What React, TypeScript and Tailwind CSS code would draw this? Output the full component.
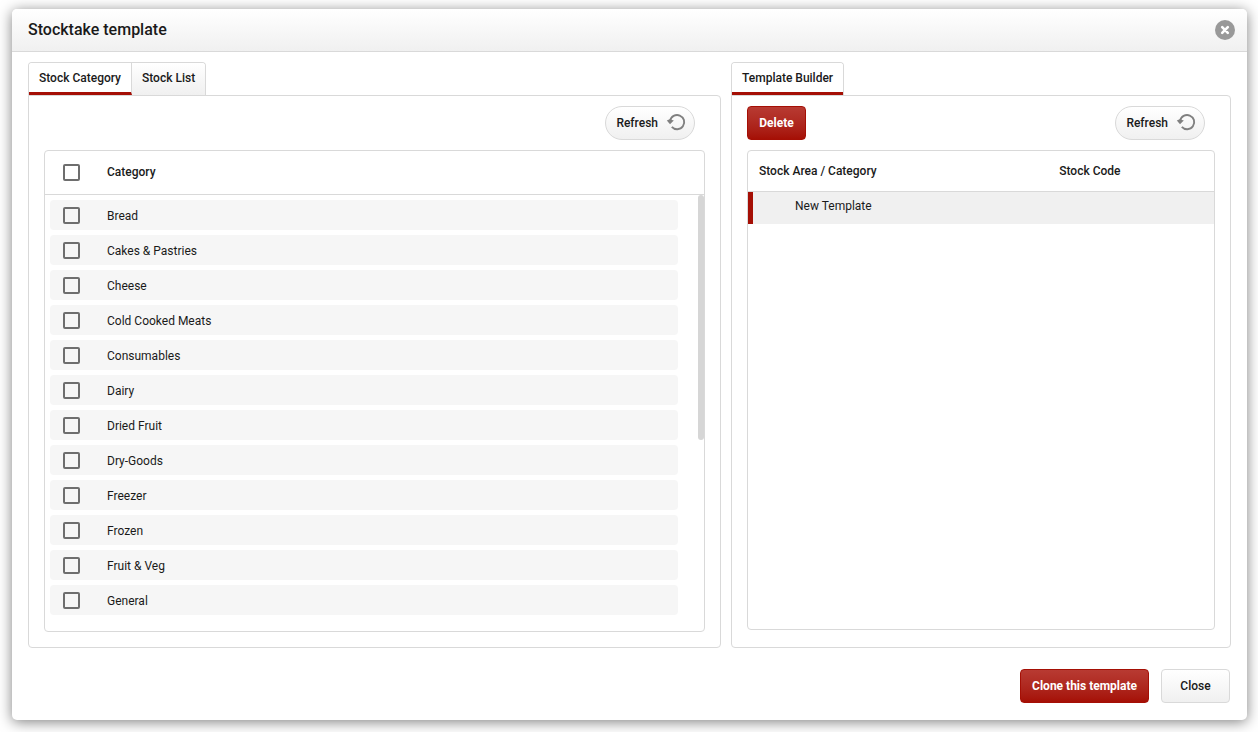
import { useState } from "react";

const categories = [
  "Bread",
  "Cakes & Pastries",
  "Cheese",
  "Cold Cooked Meats",
  "Consumables",
  "Dairy",
  "Dried Fruit",
  "Dry-Goods",
  "Freezer",
  "Frozen",
  "Fruit & Veg",
  "General",
];

const checkboxClass =
  "block size-[17px] shrink-0 cursor-pointer appearance-none rounded-[2px] border-2 border-[#6e6e6e] bg-transparent checked:bg-[#a50f05]";

function RefreshButton() {
  return (
    <button
      type="button"
      className="flex h-[34px] items-center gap-2 rounded-full border border-[#d9d9d9] bg-linear-to-b from-white to-[#f0f0f0] pr-2 pl-[10px] font-medium"
    >
      Refresh
      <svg viewBox="0 0 20 20" className="size-5" fill="none" aria-hidden="true">
        <path d="M4.1 8A7.1 7.1 0 1 1 5.8 13.8" stroke="#808080" strokeWidth="1.9" />
        <path d="M0.8 7.4L3.6 6.2L7.8 7.4L4 11.2Z" fill="#808080" />
      </svg>
    </button>
  );
}

function PrimaryButton({ children }: { children: string }) {
  return (
    <button
      type="button"
      className="h-[34px] min-w-[59px] rounded border border-[#a50f05] bg-linear-to-b from-[#b83a32] to-[#a50f05] px-[11px] font-bold text-white"
    >
      {children}
    </button>
  );
}

function Tab({ label, active, onClick }: { label: string; active: boolean; onClick?: () => void }) {
  return (
    <button
      type="button"
      role="tab"
      aria-selected={active}
      onClick={onClick}
      className={
        active
          ? "h-8 border-b-3 border-b-[#a50f05] bg-white px-[10px] font-medium"
          : "h-8 bg-linear-to-b from-white to-[#f0f0f0] px-[10px] pb-[3px] font-medium"
      }
    >
      {label}
    </button>
  );
}

export default function App() {
  const [tab, setTab] = useState("Stock Category");

  return (
    <div className="flex min-h-screen bg-white pt-[9px] pr-[11px] pb-3 pl-3 font-[Roboto,sans-serif] text-xs text-[#1a1a1a]">
      <div
        role="dialog"
        aria-labelledby="dialog-title"
        className="flex flex-1 flex-col rounded-[5px] bg-white shadow-[0_2px_14px_rgba(0,0,0,0.5)]"
      >
        <header className="flex h-[43px] items-center justify-between rounded-t-[5px] border-b border-[#d9d9d9] bg-linear-to-b from-white to-[#f0f0f0] pr-3 pl-4">
          <h1 id="dialog-title" className="text-base font-medium">
            Stocktake template
          </h1>
          <button type="button" aria-label="Close dialog">
            <svg viewBox="0 0 20 20" className="block size-5" aria-hidden="true">
              <circle cx="10" cy="10" r="10" fill="#999" />
              <path
                d="M7.2 7.2L12.8 12.8M12.8 7.2L7.2 12.8"
                stroke="#fff"
                strokeWidth="2.6"
                strokeLinecap="round"
              />
            </svg>
          </button>
        </header>

        <main className="grid flex-1 grid-cols-[693fr_500fr] gap-[10px] px-4 pt-[10px]">
          <section className="flex flex-col">
            <div role="tablist" className="flex">
              <div className="flex divide-x divide-[#d9d9d9] overflow-hidden rounded-t border border-b-0 border-[#d9d9d9]">
                {["Stock Category", "Stock List"].map((name) => (
                  <Tab key={name} label={name} active={tab === name} onClick={() => setTab(name)} />
                ))}
              </div>
            </div>
            <div className="flex flex-1 flex-col rounded-b rounded-tr border border-[#d9d9d9] px-[15px] pt-[10px] pb-[15px]">
              <div className="flex justify-end pr-[10px]">
                <RefreshButton />
              </div>
              <div className="mt-[10px] flex flex-1 flex-col rounded border border-[#d9d9d9]">
                <div className="flex h-11 items-center border-b border-[#d9d9d9] pl-[18px]">
                  <input id="all" type="checkbox" className={checkboxClass} />
                  <label htmlFor="all" className="pb-0.5 pl-[27px] font-medium">
                    Category
                  </label>
                </div>
                <div className="relative">
                  <ul className="flex flex-col gap-[5px] pt-[5px] pr-[26px] pl-[5px]">
                    {categories.map((name) => (
                      <li key={name} className="flex h-[30px] items-center rounded bg-[#f6f6f6] pl-[13px]">
                        <input id={name} type="checkbox" className={checkboxClass} />
                        <label htmlFor={name} className="pt-0.5 pl-[27px]">
                          {name}
                        </label>
                      </li>
                    ))}
                  </ul>
                  <div className="absolute top-0 right-0 h-[245px] w-[6px] rounded-full bg-[#d6d6d6]" />
                </div>
              </div>
            </div>
          </section>

          <section className="flex flex-col">
            <div role="tablist" className="flex">
              <div className="flex overflow-hidden rounded-t border border-b-0 border-[#d9d9d9]">
                <Tab label="Template Builder" active />
              </div>
            </div>
            <div className="flex flex-1 flex-col rounded-b rounded-tr border border-[#d9d9d9] px-[15px] pt-[10px] pb-[17px]">
              <div className="flex justify-between pr-[10px]">
                <PrimaryButton>Delete</PrimaryButton>
                <RefreshButton />
              </div>
              <div className="mt-[10px] flex-1 rounded border border-[#d9d9d9]">
                <table className="w-full table-fixed border-separate border-spacing-0 text-left">
                  <thead>
                    <tr>
                      <th className="h-[41px] w-[64%] border-b border-[#d9d9d9] pl-[11px] font-medium">
                        Stock Area / Category
                      </th>
                      <th className="h-[41px] border-b border-[#d9d9d9] pl-[13px] font-medium">Stock Code</th>
                    </tr>
                  </thead>
                  <tbody>
                    <tr className="bg-[#f0f0f0]">
                      <td className="h-8 border-l-5 border-[#a50f05] pb-1 pl-[42px]">New Template</td>
                      <td />
                    </tr>
                  </tbody>
                </table>
              </div>
            </div>
          </section>
        </main>

        <footer className="flex justify-end gap-3 pt-[21px] pr-[17px] pb-[17px]">
          <PrimaryButton>Clone this template</PrimaryButton>
          <button
            type="button"
            className="h-[34px] min-w-[69px] rounded border border-[#d9d9d9] bg-linear-to-b from-white to-[#f0f0f0] px-[17px] font-medium"
          >
            Close
          </button>
        </footer>
      </div>
    </div>
  );
}
